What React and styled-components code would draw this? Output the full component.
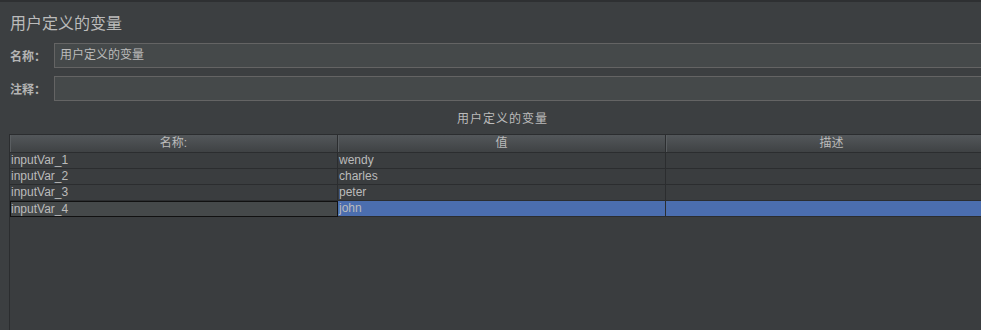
import React from "react";
import styled, { createGlobalStyle } from "styled-components";

const GlobalStyle = createGlobalStyle`
  html, body {
    margin: 0;
    padding: 0;
    background: #3c3f41;
    overflow: hidden;
  }
`;

const FONT = `"Liberation Sans", "Noto Sans CJK SC", sans-serif`;

const Page = styled.div`
  width: 981px;
  height: 330px;
  box-sizing: border-box;
  border-top: 2px solid #2e3032;
  background: #3c3f41;
  color: #bbbbbb;
  font-family: ${FONT};
  font-size: 12px;
  overflow: hidden;
  display: flex;
  flex-direction: column;
`;

const Title = styled.h1`
  margin: 0;
  padding: 11px 0 0 10px;
  height: 41px;
  box-sizing: border-box;
  font-size: 16px;
  font-weight: normal;
  line-height: 22px;
  color: #bbbbbb;
`;

const Form = styled.div`
  display: flex;
  flex-direction: column;
  gap: 8px;
  padding-left: 10px;
`;

const FieldRow = styled.div`
  display: grid;
  grid-template-columns: 44px 1fr;
  align-items: center;
  margin-right: -4px;
`;

const Label = styled.label`
  font-weight: bold;
  color: #b4b4b4;
  font-size: 12px;
`;

const Input = styled.div`
  height: 25px;
  box-sizing: border-box;
  background: #45494a;
  border: 1px solid #646464;
  padding-left: 5px;
  line-height: 23px;
  font-size: 12px;
  color: #bbbbbb;
`;

const TableCaption = styled.div`
  text-align: center;
  padding: 11px 0 8px 24px;
  line-height: 14px;
  font-size: 12px;
  letter-spacing: 1px;
  color: #bbbbbb;
`;

const TableArea = styled.div`
  flex: 1;
  margin-left: 9px;
  width: 988px;
  border-left: 1px solid #2b2d2f;
  border-top: 1px solid #2b2d2f;
  background: #3a3d3f;
`;

const Grid = styled.div`
  display: grid;
  grid-template-columns: 328px 328px 1fr;
`;

const HeaderCell = styled.div`
  height: 18px;
  box-sizing: border-box;
  background: linear-gradient(#53575a, #3f4244);
  border-bottom: 1px solid #2b2d2f;
  border-right: 1px solid #2b2d2f;
  box-shadow: inset 1px 0 0 #5a5e61;
  text-align: center;
  line-height: 17px;
  color: #bbbbbb;
`;

const Cell = styled.div`
  height: 16px;
  box-sizing: border-box;
  padding-left: 1px;
  line-height: 15px;
  border-bottom: 1px solid #2b2d2f;
  border-right: 1px solid #2b2d2f;
  background: ${(p) => (p.$selected ? "#4b6eaf" : "#3a3d3f")};
  color: #bbbbbb;
  white-space: nowrap;
  overflow: hidden;

  ${(p) =>
    p.$focused &&
    `
    background: #45494a;
    border: 1px solid #111111;
    line-height: 14px;
    padding-left: 0;
  `}
`;

const rows = [
  { name: "inputVar_1", value: "wendy", desc: "" },
  { name: "inputVar_2", value: "charles", desc: "" },
  { name: "inputVar_3", value: "peter", desc: "" },
  { name: "inputVar_4", value: "john", desc: "", selected: true },
];

export default function App() {
  return (
    <>
      <GlobalStyle />
      <Page>
        <Title>用户定义的变量</Title>
        <Form>
          <FieldRow>
            <Label>名称：</Label>
            <Input>用户定义的变量</Input>
          </FieldRow>
          <FieldRow>
            <Label>注释：</Label>
            <Input />
          </FieldRow>
        </Form>
        <TableCaption>用户定义的变量</TableCaption>
        <TableArea>
          <Grid>
            <HeaderCell>名称:</HeaderCell>
            <HeaderCell>值</HeaderCell>
            <HeaderCell>描述</HeaderCell>
            {rows.map((r) => (
              <React.Fragment key={r.name}>
                <Cell $focused={r.selected}>{r.name}</Cell>
                <Cell $selected={r.selected}>{r.value}</Cell>
                <Cell $selected={r.selected}>{r.desc}</Cell>
              </React.Fragment>
            ))}
          </Grid>
        </TableArea>
      </Page>
    </>
  );
}
